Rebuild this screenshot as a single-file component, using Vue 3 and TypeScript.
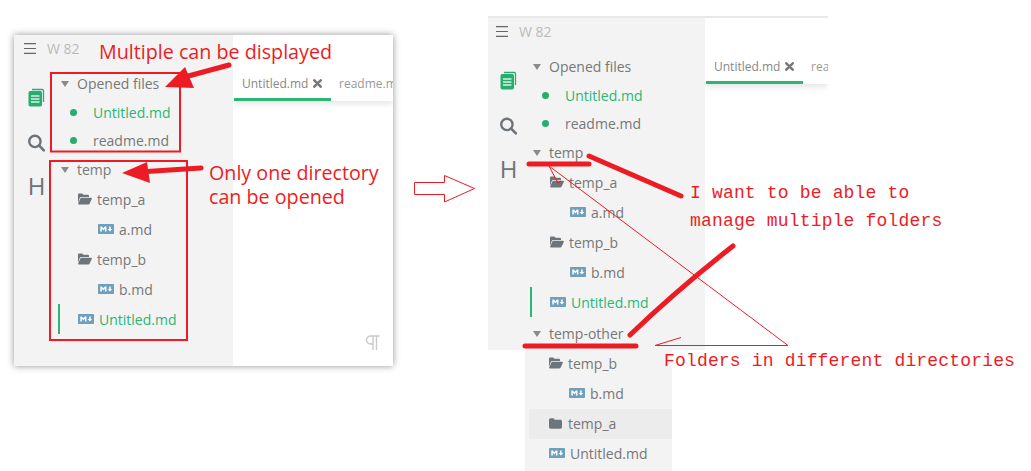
<script setup lang="ts">
type Kind = 'head' | 'open' | 'folder' | 'doc' | 'root' | 'closed'
interface Row { kind: Kind; label: string; active?: boolean; hover?: boolean }

const leftRows: Row[] = [
  { kind: 'head', label: 'Opened files' },
  { kind: 'open', label: 'Untitled.md', active: true },
  { kind: 'open', label: 'readme.md' },
  { kind: 'head', label: 'temp' },
  { kind: 'folder', label: 'temp_a' },
  { kind: 'doc', label: 'a.md' },
  { kind: 'folder', label: 'temp_b' },
  { kind: 'doc', label: 'b.md' },
  { kind: 'root', label: 'Untitled.md', active: true },
]
const rightRows: Row[] = [...leftRows, { kind: 'head', label: 'temp-other' }]
const extraRows: Row[] = [
  { kind: 'folder', label: 'temp_b' },
  { kind: 'doc', label: 'b.md' },
  { kind: 'closed', label: 'temp_a', hover: true },
  { kind: 'root', label: 'Untitled.md' },
]
const windows = [
  { id: 'left', rows: leftRows, pilcrow: true },
  { id: 'right', rows: rightRows, pilcrow: false },
]
</script>

<template>
  <div class="canvas">
    <svg class="sprite" width="0" height="0" aria-hidden="true">
      <symbol id="i-md" viewBox="0 0 208 128">
        <rect width="208" height="128" rx="8" fill="#6f9fbc" />
        <path fill="#fff" d="M30 98V30h20l20 25 20-25h20v68H90V59L70 84 50 59v39zm125 0l-30-33h20V30h20v35h20z" />
      </symbol>
      <symbol id="i-open" viewBox="0 0 14 12">
        <path fill="#6d747b" d="M0 10V1.6C0 .9.5.4 1.2.4h3l1.3 1.4h4.3c.7 0 1.2.5 1.2 1.2v1H3.4C2.6 4 2 4.4 1.7 5z" />
        <path fill="#6d747b" d="M3.300 4.800H13c.7 0 1.100.6.800 1.200l-2.300 4.700c-.2.500-.7.800-1.200.8H.9c-.6 0-.9-.5-.7-1l2.200-5c.2-.5.500-.7.900-.7z" />
      </symbol>
      <symbol id="i-closed" viewBox="0 0 13 11">
        <path fill="#6d747b" d="M0 2C0 .9.700.2 1.700.2h2.800l1.400 1.500h5.400c1 0 1.700.7 1.700 1.700v5.700c0 1-.7 1.700-1.700 1.700H1.700C.7 10.800 0 10.100 0 9.100z" />
      </symbol>
    </svg>

    <section v-for="win in windows" :key="win.id" class="win" :class="'win-' + win.id">
      <aside class="side">
        <header class="topbar">
          <svg class="burger" width="12" height="11" viewBox="0 0 12 11">
            <path d="M0 .7h12M0 5.500h12M0 10.300h12" stroke="#666" stroke-width="1.200" fill="none" />
          </svg>
          <span class="count">W 82</span>
        </header>
        <div class="body">
          <nav class="rail">
            <div class="rail-item">
              <svg width="17" height="19" viewBox="0 0 17 19">
                <path d="M4 1.500h10.200c.8 0 1.300.5 1.300 1.300V14" fill="none" stroke="#27ae6f" stroke-width="1.300" />
                <rect x="0.500" y="3" width="13.500" height="15.500" rx="1.800" fill="#27ae6f" />
                <path d="M3 8h8.500M3 11h8.500M3 14h8.500" stroke="#d6f2e4" stroke-width="1.300" />
              </svg>
            </div>
            <div class="rail-item">
              <svg width="18" height="18" viewBox="0 0 18 18">
                <circle cx="7.300" cy="7.300" r="6" fill="none" stroke="#6b737b" stroke-width="2.500" />
                <path d="M11.800 11.800l5 5" stroke="#6b737b" stroke-width="2.900" stroke-linecap="round" />
              </svg>
            </div>
            <div class="rail-item rail-h">H</div>
          </nav>
          <div class="tree">
            <div
              v-for="(row, i) in win.rows"
              :key="i"
              class="row"
              :class="['row-' + row.kind, { active: row.active }]"
            >
              <i v-if="row.kind === 'head'" class="caret"></i>
              <i v-else-if="row.kind === 'open'" class="dot"></i>
              <svg v-else-if="row.kind === 'folder'" class="ic-folder" width="14" height="12"><use href="#i-open" /></svg>
              <svg v-else class="ic-md" width="16" height="10"><use href="#i-md" /></svg>
              <span>{{ row.label }}</span>
            </div>
          </div>
        </div>
      </aside>
      <main class="main">
        <div class="tabs">
          <div class="tab tab-on">
            <span>Untitled.md</span>
            <svg width="9" height="9" viewBox="0 0 9 9">
              <path d="M1.300 1.300l6.400 6.400M7.700 1.300l-6.400 6.400" stroke="#777" stroke-width="2.500" stroke-linecap="round" />
            </svg>
          </div>
          <div class="tab"><span>readme.md</span></div>
        </div>
        <svg v-if="win.pilcrow" class="pilcrow" width="15" height="15" viewBox="0 0 15 15">
          <path d="M14.500 1H5.500a4 4 0 0 0 0 8H8M8 1v14M11.500 1v14" fill="none" stroke="#c9c9c9" stroke-width="1.400" />
        </svg>
      </main>
    </section>

    <section class="extra">
      <div
        v-for="(row, i) in extraRows"
        :key="i"
        class="row"
        :class="['row-' + row.kind, { hover: row.hover }]"
      >
        <svg v-if="row.kind === 'folder'" width="14" height="12"><use href="#i-open" /></svg>
        <svg v-else-if="row.kind === 'closed'" width="13" height="11"><use href="#i-closed" /></svg>
        <svg v-else width="16" height="10"><use href="#i-md" /></svg>
        <span>{{ row.label }}</span>
      </div>
    </section>

    <svg class="marks" width="1031" height="471" viewBox="0 0 1031 471">
      <g fill="none" stroke="#ed1c24">
        <rect x="51" y="73" width="129" height="78.500" stroke-width="2" />
        <rect x="50" y="161" width="137" height="179" stroke-width="2" />
        <path d="M414.500 182.500h30v-7l30 13-30 13.500v-7.500h-30z" stroke-width="1" />
        <path d="M549 166l239 179.500H655l26-8M549 166l9 17 3-2" stroke-width="1" />
        <path d="M229 65l-48 13" stroke-width="5" stroke-linecap="round" />
        <path d="M201 168l-62 4" stroke-width="5" stroke-linecap="round" />
        <path d="M529 164h60M589 156l92 40M733 246q-55 43-103 89M525 346h111" stroke-width="5" stroke-linecap="round" />
      </g>
      <g fill="#ed1c24">
        <path d="M165 87l20-20 9 21z" />
        <path d="M122 173l25-11 3 21z" />
      </g>
    </svg>

    <div class="note note-sans n1">Multiple can be displayed</div>
    <div class="note note-sans n2">Only one directory<br />can be opened</div>
    <div class="note note-mono n3">I want to be able to<br />manage multiple folders</div>
    <div class="note note-mono n4">Folders in different directories</div>
  </div>
</template>

<style scoped>
.canvas {
  position: relative;
  width: 1031px;
  height: 471px;
  overflow: hidden;
  background: #fff;
  font-family: "Open Sans", sans-serif;
  font-size: 14px;
  color: #777;
}
.sprite { position: absolute; }

.win {
  position: absolute;
  display: flex;
  background: #fff;
  overflow: hidden;
}
.win-left {
  left: 14px;
  top: 35px;
  width: 379px;
  height: 331px;
  box-shadow: 0 0 7px rgba(0, 0, 0, .42);
  --top: 34px;
  --rail: 36px;
  --side: 219px;
  overflow: visible;
}
.win-right {
  left: 488px;
  top: 16px;
  width: 340px;
  height: 332px;
  border-top: 2px solid #e8e8e8;
  --top: 34px;
  --rail: 34px;
  --side: 217px;
}
.side {
  width: var(--side);
  flex: none;
  background: #f3f3f3;
  display: flex;
  flex-direction: column;
}
.topbar {
  height: var(--top);
  flex: none;
  display: flex;
  align-items: center;
  gap: 11px;
  padding: 0 0 8px calc(var(--rail) - 26px);
  box-sizing: border-box;
}
.burger { flex: none; }
.count { color: #bbb; font-size: 14px; }
.body { display: flex; flex: 1; min-height: 0; }
.rail {
  width: var(--rail);
  flex: none;
  box-sizing: border-box;
  padding: 6px 0 0 calc(var(--rail) - 22px);
}
.rail-item {
  width: 17px;
  height: 45px;
  display: flex;
  align-items: center;
  justify-content: center;
}
.rail-h {
  font-size: 24px;
  font-weight: 500;
  color: #6b737b;
  padding-bottom: 5px;
  box-sizing: border-box;
}

.tree { flex: 1; min-width: 0; }
.row {
  position: relative;
  display: flex;
  align-items: center;
  height: 30px;
  white-space: nowrap;
}
.row svg { flex: none; }
.active { color: #2bb673; }
.row-head { height: 29px; padding-left: 11px; gap: 8px; }
.row-open + .row-head { margin-top: 1px; }
.row-root + .row-head { margin-top: 2px; }
.row-open { height: 28px; padding-left: 20px; gap: 16px; }
.row-folder { padding-left: 28px; gap: 5px; }
.row-doc { padding-left: 48px; gap: 5px; }
.row-root { padding-left: 28px; gap: 5px; }
.tree .row-root::before {
  content: "";
  position: absolute;
  left: 8px;
  top: 0;
  width: 2px;
  height: 30px;
  background: #2bb673;
}
.caret {
  width: 0;
  height: 0;
  border-left: 4px solid transparent;
  border-right: 4px solid transparent;
  border-top: 6px solid #8a8a8a;
}
.dot {
  width: 7px;
  height: 7px;
  border-radius: 50%;
  background: #27ae6f;
}

.main {
  position: relative;
  flex: 1;
  min-width: 0;
  overflow: hidden;
}
.tabs {
  height: calc(var(--top) + 32px);
  padding-left: 1px;
  display: flex;
  align-items: flex-end;
  box-shadow: 0 3px 6px rgba(0, 0, 0, .1);
  box-sizing: border-box;
}
.tab {
  height: 32px;
  box-sizing: border-box;
  flex: none;
  display: flex;
  align-items: center;
  gap: 5px;
  padding: 0 8px;
  font-size: 12px;
  color: #999;
  border-bottom: 3px solid transparent;
}
.tab-on {
  width: 97px;
  color: #888;
  border-bottom-color: #2bb673;
}
.pilcrow {
  position: absolute;
  right: 13px;
  bottom: 16px;
}

.extra {
  position: absolute;
  left: 525px;
  top: 349px;
  width: 147px;
  height: 122px;
  background: #f3f3f3;
}
.extra .row { padding-bottom: 2px; box-sizing: border-box; }
.extra .row-folder, .extra .row-closed { padding-left: 24px; }
.extra .row-folder { gap: 5px; }
.extra .row-doc { padding-left: 44px; }
.extra .row-root { padding-left: 24px; }
.extra .row-closed { gap: 6px; }
.extra .hover {
  margin-left: 4px;
  padding-left: 20px;
  background: #ececec;
}

.marks {
  position: absolute;
  left: 0;
  top: 0;
}
.note {
  position: absolute;
  color: #ed1c24;
  white-space: nowrap;
}
.note-sans { font-family: "Open Sans", sans-serif; font-size: 19.7px; line-height: 24px; }
.note-mono {
  font-family: "Liberation Mono", monospace;
  font-size: 18px;
  letter-spacing: .17px;
  line-height: 28px;
}
.n1 { left: 99px; top: 40px; }
.n2 { left: 209px; top: 161px; }
.n3 { left: 690px; top: 179px; }
.n4 { left: 664px; top: 347px; }
</style>
